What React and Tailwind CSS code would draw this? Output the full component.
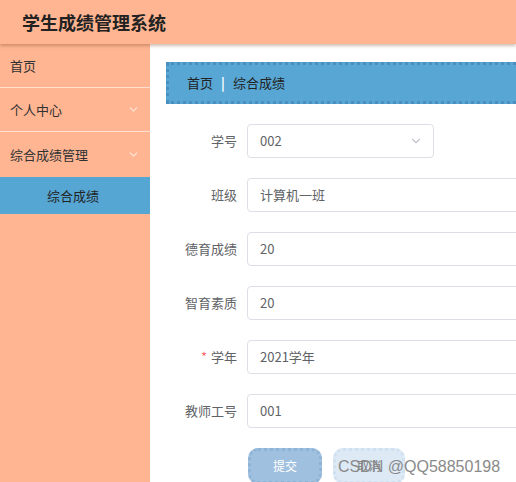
import { ChevronDown } from 'lucide-react'

const font = { fontFamily: '"Noto Sans CJK SC", "Noto Sans", sans-serif' }

const rows = [
  { label: '班级', value: '计算机一班' },
  { label: '德育成绩', value: '20' },
  { label: '智育素质', value: '20' },
  { label: '学年', value: '2021学年', required: true },
  { label: '教师工号', value: '001' },
]

function Row({ label, required, children }) {
  return (
    <div className="flex items-center h-[34px] mb-5">
      <div className="w-[97px] pr-[10px] text-right text-[13px] text-[#606266] shrink-0">
        {required && <span className="text-[#f56c6c] mr-1">*</span>}
        {label}
      </div>
      {children}
    </div>
  )
}

export default function App() {
  return (
    <div className="w-[516px] h-[482px] overflow-hidden bg-white flex flex-col" style={font}>
      {/* Header */}
      <div className="h-[44px] bg-[#ffb591] flex items-center pl-[22px] shrink-0 shadow-[0_2px_3px_rgba(120,70,40,0.35)] relative z-10">
        <h1 className="text-[18px] font-bold text-[#222]">学生成绩管理系统</h1>
      </div>

      <div className="flex flex-1 min-h-0">
        {/* Sidebar */}
        <div className="w-[150px] bg-[#ffb591] shrink-0 text-[13px] text-[#303133]">
          <div className="h-[44px] flex items-center pl-[10px] border-b border-[#ffe0d0]">首页</div>
          <div className="h-[44px] flex items-center justify-between pl-[10px] pr-[10px] border-b border-[#ffe0d0]">
            个人中心
            <ChevronDown size={13} className="text-[#ffe4d6]" />
          </div>
          <div className="h-[45px] flex items-center justify-between pl-[10px] pr-[10px]">
            综合成绩管理
            <ChevronDown size={13} className="text-[#ffe4d6]" />
          </div>
          <div className="h-[37px] flex items-center pl-[47px] bg-[#56a6d4] text-[#222]">综合成绩</div>
        </div>

        {/* Main */}
        <div className="flex-1 min-w-0 pt-[18px]">
          <div className="ml-[16px] h-[42px] w-[380px] bg-[#57a6d3] border-[3px] border-dotted border-[#4a8fbd] flex items-center pl-[18px] text-[13px] text-[#222]">
            <span>首页</span>
            <span className="mx-[8px] text-white font-bold">|</span>
            <span>综合成绩</span>
          </div>

          <div className="mt-[20px]">
            <Row label="学号">
              <div className="w-[187px] h-[34px] border border-[#dcdfe6] rounded flex items-center justify-between pl-[12px] pr-[10px] text-[13px] text-[#606266] shrink-0">
                002
                <ChevronDown size={14} className="text-[#c0c4cc]" />
              </div>
            </Row>
            {rows.map(r => (
              <Row key={r.label} label={r.label} required={r.required}>
                <div className="w-[320px] h-[34px] border border-[#dcdfe6] rounded flex items-center pl-[12px] text-[13px] text-[#606266] shrink-0">
                  {r.value}
                </div>
              </Row>
            ))}

            <div className="flex items-center pl-[98px] gap-[11px] relative">
              <button className="w-[74px] h-[36px] rounded-[10px] bg-[#9fc0de] border-[3px] border-dotted border-[#8db3d6] text-white text-[12px]">提交</button>
              <button className="w-[72px] h-[36px] rounded-[10px] bg-[#dde9f5] border-[3px] border-dotted border-[#cfe0f0] text-[#777] text-[12px]">取消</button>
              <span
                className="absolute left-[188px] top-[7px] text-[16px] text-[#8a8a8a]"
                style={{ fontFamily: '"Liberation Sans", "DejaVu Sans", sans-serif' }}
              >
                CSDN @QQ58850198
              </span>
            </div>
          </div>
        </div>
      </div>
    </div>
  )
}
